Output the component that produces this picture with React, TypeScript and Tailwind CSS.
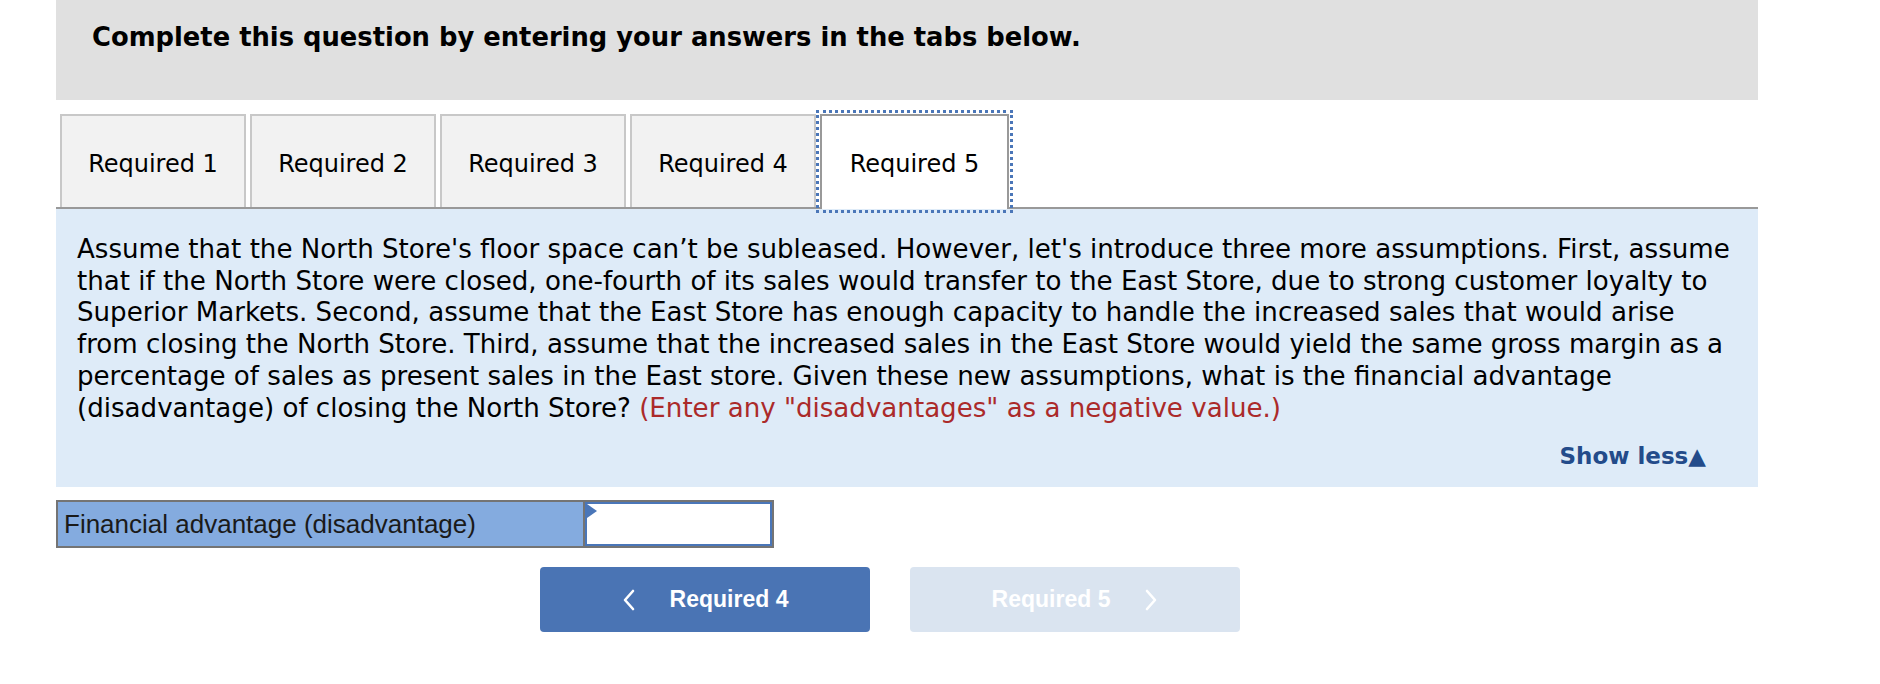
import React from "react";

const tabs = ["Required 1", "Required 2", "Required 3", "Required 4"];

export default function App() {
  return (
    <div className="w-[1880px] h-[684px] bg-white" style={{ fontFamily: '"DejaVu Sans", Verdana, sans-serif' }}>
      <div className="ml-[56px] w-[1702px]">
        <div className="h-[100px] bg-[#e0e0e0] pl-[36px] pt-[20px]">
          <h1 className="text-[25.8px] font-bold text-black leading-[34px]">
            Complete this question by entering your answers in the tabs below.
          </h1>
        </div>
        <div className="mt-[14px] flex items-end gap-[4px] pl-[4px] border-b-2 border-[#999999] h-[95px]">
          {tabs.map((t) => (
            <div
              key={t}
              className="w-[186px] h-[93px] bg-[#f2f2f2] border-2 border-b-0 border-[#c8c8c8] flex items-center justify-center pt-[4px] text-[24px] text-black"
            >
              {t}
            </div>
          ))}
          <div className="relative w-[189px] h-[95px] -mb-[2px] bg-white border-2 border-b-0 border-[#999999] flex items-center justify-center pt-[2px] text-[24px] text-black outline-[3px] outline-dotted outline-[#4a76b8] outline-offset-[1px]">
            Required 5
          </div>
        </div>
        <div className="bg-[#deebf8] h-[278px] pl-[21px] pr-[52px] pt-[25px] flex flex-col">
          <p className="text-[26.1px] leading-[31.7px] text-black whitespace-nowrap">
            Assume that the North Store's floor space can’t be subleased. However, let's introduce three more assumptions. First, assume
            <br />
            that if the North Store were closed, one-fourth of its sales would transfer to the East Store, due to strong customer loyalty to
            <br />
            Superior Markets. Second, assume that the East Store has enough capacity to handle the increased sales that would arise
            <br />
            from closing the North Store. Third, assume that the increased sales in the East Store would yield the same gross margin as a
            <br />
            percentage of sales as present sales in the East store. Given these new assumptions, what is the financial advantage
            <br />
            (disadvantage) of closing the North Store?{" "}
            <span className="text-[#ab2a2a]">(Enter any "disadvantages" as a negative value.)</span>
          </p>
          <div className="mt-[17px] flex justify-end">
            <span className="text-[23px] font-bold text-[#234b8a] leading-[30px]">Show less▲</span>
          </div>
        </div>
        <div className="mt-[13px] flex w-[718px] h-[48px] border-2 border-[#747474]">
          <div
            className="w-[527px] bg-[#84abdf] border-r-2 border-[#747474] flex items-center pl-[6px] text-[26px] text-[#1a1a1a]"
            style={{ fontFamily: '"Liberation Sans", Arial, sans-serif' }}
          >
            Financial advantage (disadvantage)
          </div>
          <div className="relative flex-1 border-2 border-[#4a76b8] bg-white">
            <svg className="absolute left-0 top-0" width="12" height="14" viewBox="0 0 12 14">
              <polygon points="0,0 10,7 0,14" fill="#4a76b8" />
            </svg>
          </div>
        </div>
        <div
          className="mt-[19px] ml-[484px] flex gap-[40px]"
          style={{ fontFamily: '"Liberation Sans", Arial, sans-serif' }}
        >
          <div className="w-[330px] h-[65px] rounded-[4px] bg-[#4a74b4] flex items-center justify-center gap-[34px] text-white text-[23px] font-bold">
            <svg width="14" height="22" viewBox="0 0 14 22" fill="none">
              <path d="M11 2 L3 11 L11 20" stroke="white" strokeWidth="2.6" strokeLinecap="round" strokeLinejoin="round" />
            </svg>
            <span>Required 4</span>
          </div>
          <div className="w-[330px] h-[65px] rounded-[4px] bg-[#dae4f0] flex items-center justify-center gap-[34px] text-white text-[23px] font-bold">
            <span>Required 5</span>
            <svg width="14" height="22" viewBox="0 0 14 22" fill="none">
              <path d="M3 2 L11 11 L3 20" stroke="white" strokeWidth="2.6" strokeLinecap="round" strokeLinejoin="round" />
            </svg>
          </div>
        </div>
      </div>
    </div>
  );
}
